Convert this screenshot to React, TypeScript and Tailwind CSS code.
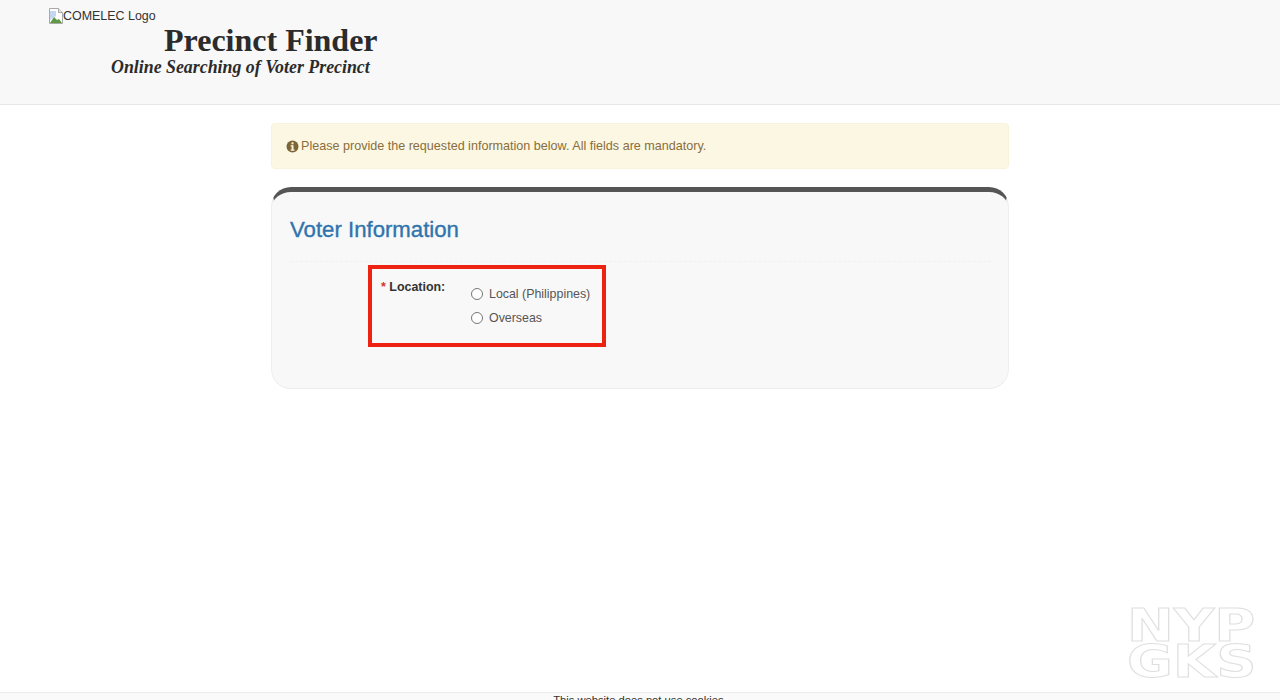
export default function App() {
  return (
    <div className="relative h-[700px] overflow-hidden bg-white font-['Liberation_Sans',Arial,sans-serif]">
      <header className="h-[105px] border-b border-[#e7e7e7] bg-[#f8f8f8] pl-[49px] pt-[8px]">
        <div className="flex h-[16px] items-center text-[12.45px] leading-none text-[#333]">
          <svg width="14" height="16" viewBox="0 0 14 16" className="shrink-0">
            <path d="M.5.5h9l4 4v11H.5z" fill="#fff" stroke="#a8a8a8" />
            <path d="M9.5.5v4h4" fill="#e8e8e8" stroke="#a8a8a8" />
            <path d="M1 15l4-6 3 3 2-1 3 4z" fill="#5c9a45" />
            <path d="M1 3h6v5l-3 2-3 2z" fill="#c4d6f0" />
          </svg>
          <span>COMELEC Logo</span>
        </div>
        <h1 className="ml-[115px] mt-[-2px] text-[32px] font-bold leading-[36px] text-[#2b2b2b] font-['Liberation_Serif',serif]">
          Precinct Finder
        </h1>
        <p className="ml-[62px] mt-[-1px] text-[17.85px] font-bold italic leading-[20px] text-[#2b2b2b] font-['Liberation_Serif',serif]">
          Online Searching of Voter Precinct
        </p>
      </header>

      <main className="mx-auto w-[738px] pt-[18px]">
        <div className="flex h-[46px] items-center gap-[2px] rounded border border-[#faf3dc] bg-[#fbf7e3] pl-[14px] text-[12.58px] text-[#8a6d3b]">
          <svg width="13" height="13" viewBox="0 0 13 13" className="shrink-0">
            <circle cx="6.5" cy="6.5" r="6" fill="#7d6535" />
            <rect x="5.5" y="2.3" width="2" height="2" fill="#fbf7e3" />
            <path d="M4.6 5.3h2.9v4.2h1v1.2H4.6V9.5h1V6.5h-1z" fill="#fbf7e3" />
          </svg>
          <span>Please provide the requested information below. All fields are mandatory.</span>
        </div>

        <section className="mt-[18px] h-[202px] rounded-[20px] border border-[#eeeeee] border-t-[5px] border-t-[#555555] bg-[#f8f8f8] pl-[18px] pt-[24px]">
          <h2 className="text-[22.2px] leading-[28px] text-[#2f74ad] [-webkit-text-stroke:0.35px_#2f74ad]">
            Voter Information
          </h2>
          <div className="mr-[17px] mt-[17px] border-t border-dashed border-[#f1f1f1]" />
          <div className="ml-[78px] mt-[3px] flex h-[82px] w-[238px] border-4 border-[#ee2211] pl-[9px] pt-[10px]">
            <div className="w-[90px] text-[12.45px] font-bold leading-[16px] text-[#333]">
              <span className="text-[#d9342b]">*</span> Location:
            </div>
            <div className="flex flex-col gap-[6px] pt-[6px] text-[12.4px] text-[#555]">
              <label className="flex h-[18px] items-center gap-[6px]">
                <span className="h-[12px] w-[12px] rounded-full border border-[#777] bg-white" />
                Local (Philippines)
              </label>
              <label className="flex h-[18px] items-center gap-[6px]">
                <span className="h-[12px] w-[12px] rounded-full border border-[#777] bg-white" />
                Overseas
              </label>
            </div>
          </div>
        </section>
      </main>

      <footer className="absolute bottom-0 left-0 right-0 h-[8px] overflow-hidden border-t border-[#ececec] bg-[#fafafa] text-center text-[11.2px] leading-[14px] text-[#333]">
        This website does not use cookies.
      </footer>

      <div className="absolute left-[1127px] top-[608px] origin-left scale-x-[1.27] font-['DejaVu_Sans',sans-serif] text-[44px] font-bold leading-[36px] text-transparent [-webkit-text-stroke:1px_#dfdfdf]">
        <div>NYP</div>
        <div>GKS</div>
      </div>
    </div>
  );
}
